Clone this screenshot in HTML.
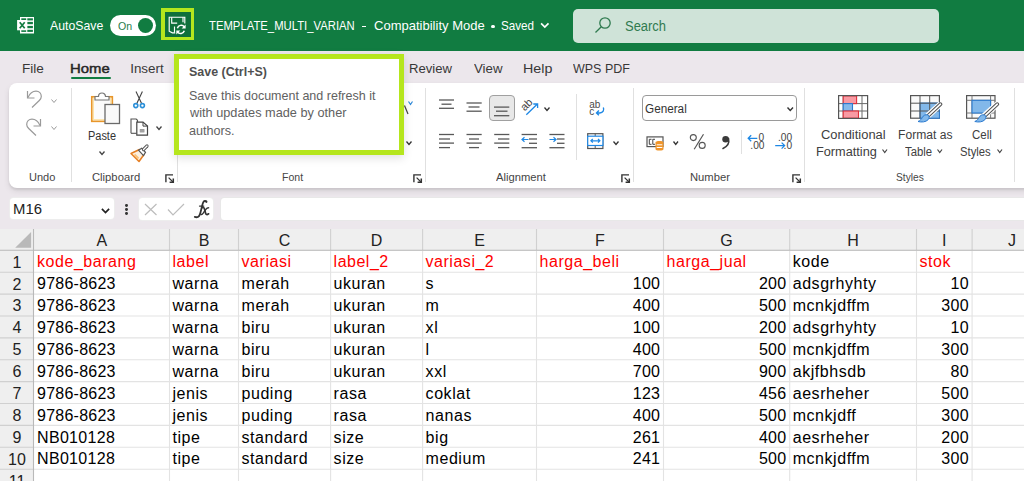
<!DOCTYPE html>
<html><head><meta charset="utf-8"><title>Excel</title><style>*{margin:0;padding:0;box-sizing:border-box}
html,body{width:1024px;height:481px;overflow:hidden;background:#ece7ec;font-family:"Liberation Sans",sans-serif}
.a{position:absolute;white-space:nowrap}
svg.a{overflow:visible}</style></head><body>
<div class="a" style="left:0px;top:0px;width:1024px;height:51px;background:#117c41"></div>
<svg class="a" style="left:17px;top:16px" width="18" height="18" viewBox="0 0 18 18"><rect x="3" y="1" width="14" height="16.5" fill="#fff"/>
<g fill="#117c41"><rect x="10.3" y="2.3" width="5.6" height="2.1"/><rect x="10.3" y="5.9" width="5.6" height="2.3"/><rect x="10.3" y="9.9" width="5.6" height="2.3"/><rect x="10.3" y="13.8" width="5.6" height="2.1"/>
<rect x="4.3" y="2.3" width="4.9" height="2.1"/><rect x="4.3" y="13.8" width="4.9" height="2.1"/></g>
<rect x="0.1" y="4" width="10" height="10.3" fill="#fff"/>
<path d="M2.7 6.2l5 6M7.7 6.2l-5 6" stroke="#117c41" stroke-width="1.7"/></svg>
<div class="a" style="left:50.20px;top:19.07px;font-size:13.5px;line-height:13.5px;color:#fff;font-weight:normal;transform:scaleX(0.9098);transform-origin:0 0;">AutoSave</div>
<div class="a" style="left:110px;top:15px;width:46px;height:21px;border-radius:10.5px;background:#fff"></div>
<div class="a" style="left:117.70px;top:20.89px;font-size:11px;line-height:11px;color:#2a7d4e;font-weight:normal;transform:scaleX(0.9618);transform-origin:0 0;">On</div>
<div class="a" style="left:138px;top:17.7px;width:15px;height:15px;border-radius:50%;background:#117c41"></div>
<div class="a" style="left:160.8px;top:8.3px;width:33.2px;height:31.7px;border:solid #b5e61d;border-width:4px 3.2px 3.3px 4px;background:#0f703b"></div>
<svg class="a" style="left:168px;top:16px" width="19" height="19" viewBox="0 0 19 19"><g fill="none" stroke="#fff" stroke-width="1.15">
<path d="M16.8 7.6V1.2H1.2V15.2L4.3 16.8H7.2"/><path d="M3.7 1.2V7.1H9.2M15 1.2V6.2M6.5 10.6V16.8"/></g>
<g fill="none" stroke="#fff" stroke-width="1.5">
<path d="M9.4 12.2A3.9 3.9 0 0 1 16.3 10.9"/><path d="M16.3 14.8A3.9 3.9 0 0 1 9.5 16"/></g>
<path d="M17.6 8.6V12.6H13.6z" fill="#fff"/><path d="M8.3 18.4V14.4H12.3z" fill="#fff"/></svg>
<div class="a" style="left:208.80px;top:19.23px;font-size:13.2px;line-height:13.2px;color:#fff;font-weight:normal;transform:scaleX(0.8573);transform-origin:0 0;">TEMPLATE_MULTI_VARIAN</div>
<div class="a" style="left:362.3px;top:25.9px;width:3.8px;height:1.3px;background:#fff"></div>
<div class="a" style="left:374.30px;top:19.23px;font-size:13.2px;line-height:13.2px;color:#fff;font-weight:normal;transform:scaleX(0.9874);transform-origin:0 0;">Compatibility Mode</div>
<div class="a" style="left:491.1px;top:24.6px;width:3.5px;height:3.5px;border-radius:50%;background:#fff"></div>
<div class="a" style="left:500.70px;top:19.23px;font-size:13.2px;line-height:13.2px;color:#fff;font-weight:normal;transform:scaleX(0.8851);transform-origin:0 0;">Saved</div>
<svg class="a" style="left:540px;top:22.3px" width="10" height="7" viewBox="0 0 10 7"><path d="M1.1 1.3L4.8 5 8.5 1.3" fill="none" stroke="#fff" stroke-width="1.7"/></svg>
<div class="a" style="left:573px;top:8.5px;width:366px;height:34px;border-radius:5px;background:#cfe3d8"></div>
<svg class="a" style="left:594px;top:16px" width="18" height="18" viewBox="0 0 18 18"><circle cx="11" cy="7" r="5.2" fill="none" stroke="#2f7a4f" stroke-width="1.3"/><path d="M7.3 10.7L1.5 16.5" stroke="#2f7a4f" stroke-width="1.3"/></svg>
<div class="a" style="left:625.20px;top:19.35px;font-size:14px;line-height:14px;color:#2f7a4f;font-weight:normal;transform:scaleX(0.9249);transform-origin:0 0;">Search</div>
<div class="a" style="left:21.99px;top:61.56px;font-size:13.4px;line-height:13.4px;color:#383838;font-weight:normal;transform:scaleX(1.0134);transform-origin:0 0;">File</div>
<div class="a" style="left:70.19px;top:61.56px;font-size:13.4px;line-height:13.4px;color:#262626;font-weight:normal;transform:scaleX(1.1117);transform-origin:0 0;-webkit-text-stroke:0.45px #262626;">Home</div>
<div class="a" style="left:71px;top:77px;width:40px;height:2px;background:#117c41;border-radius:1px"></div>
<div class="a" style="left:130.20px;top:61.56px;font-size:13.4px;line-height:13.4px;color:#383838;font-weight:normal;">Insert</div>
<div class="a" style="left:409.12px;top:61.56px;font-size:13.4px;line-height:13.4px;color:#383838;font-weight:normal;transform:scaleX(0.9784);transform-origin:0 0;">Review</div>
<div class="a" style="left:473.60px;top:61.56px;font-size:13.4px;line-height:13.4px;color:#383838;font-weight:normal;transform:scaleX(0.9893);transform-origin:0 0;">View</div>
<div class="a" style="left:522.83px;top:61.56px;font-size:13.4px;line-height:13.4px;color:#383838;font-weight:normal;transform:scaleX(1.0654);transform-origin:0 0;">Help</div>
<div class="a" style="left:573.20px;top:61.56px;font-size:13.4px;line-height:13.4px;color:#383838;font-weight:normal;transform:scaleX(0.9322);transform-origin:0 0;">WPS PDF</div>
<div class="a" style="left:8.5px;top:82.5px;width:1040px;height:105.3px;background:#fff;border-radius:8px;box-shadow:0 2px 2px rgba(0,0,0,.08),0 3px 6px rgba(0,0,0,.09)"></div>
<div class="a" style="left:71px;top:88px;width:1px;height:94px;background:#e0e0e0"></div>
<div class="a" style="left:177px;top:88px;width:1px;height:94px;background:#e0e0e0"></div>
<div class="a" style="left:425px;top:88px;width:1px;height:94px;background:#e0e0e0"></div>
<div class="a" style="left:633px;top:88px;width:1px;height:94px;background:#e0e0e0"></div>
<div class="a" style="left:576px;top:94px;width:1px;height:66px;background:#e0e0e0"></div>
<div class="a" style="left:804px;top:88px;width:1px;height:94px;background:#e0e0e0"></div>
<div class="a" style="left:1014px;top:88px;width:1px;height:94px;background:#e0e0e0"></div>
<div class="a" style="left:28.70px;top:172.31px;font-size:11.8px;line-height:11.8px;color:#454545;font-weight:normal;transform:scaleX(0.9357);transform-origin:0 0;">Undo</div>
<div class="a" style="left:92.20px;top:172.31px;font-size:11.8px;line-height:11.8px;color:#454545;font-weight:normal;transform:scaleX(0.9533);transform-origin:0 0;">Clipboard</div>
<div class="a" style="left:281.50px;top:172.31px;font-size:11.8px;line-height:11.8px;color:#454545;font-weight:normal;transform:scaleX(0.8920);transform-origin:0 0;">Font</div>
<div class="a" style="left:495.75px;top:172.31px;font-size:11.8px;line-height:11.8px;color:#454545;font-weight:normal;transform:scaleX(0.9496);transform-origin:0 0;">Alignment</div>
<div class="a" style="left:690.00px;top:172.31px;font-size:11.8px;line-height:11.8px;color:#454545;font-weight:normal;transform:scaleX(0.9517);transform-origin:0 0;">Number</div>
<div class="a" style="left:895.70px;top:172.31px;font-size:11.8px;line-height:11.8px;color:#454545;font-weight:normal;transform:scaleX(0.8658);transform-origin:0 0;">Styles</div>
<svg class="a" style="left:164.5px;top:173.5px" width="10" height="10" viewBox="0 0 10 10"><path d="M0.9 8.2V0.9H8" fill="none" stroke="#333" stroke-width="1.4"/><path d="M3.6 3.6L8 8" stroke="#333" stroke-width="1.2"/><path d="M8.3 4.6V8.3H4.6" fill="none" stroke="#333" stroke-width="1.5"/></svg>
<svg class="a" style="left:412.5px;top:173.5px" width="10" height="10" viewBox="0 0 10 10"><path d="M0.9 8.2V0.9H8" fill="none" stroke="#333" stroke-width="1.4"/><path d="M3.6 3.6L8 8" stroke="#333" stroke-width="1.2"/><path d="M8.3 4.6V8.3H4.6" fill="none" stroke="#333" stroke-width="1.5"/></svg>
<svg class="a" style="left:621px;top:173.5px" width="10" height="10" viewBox="0 0 10 10"><path d="M0.9 8.2V0.9H8" fill="none" stroke="#333" stroke-width="1.4"/><path d="M3.6 3.6L8 8" stroke="#333" stroke-width="1.2"/><path d="M8.3 4.6V8.3H4.6" fill="none" stroke="#333" stroke-width="1.5"/></svg>
<svg class="a" style="left:792px;top:173.5px" width="10" height="10" viewBox="0 0 10 10"><path d="M0.9 8.2V0.9H8" fill="none" stroke="#333" stroke-width="1.4"/><path d="M3.6 3.6L8 8" stroke="#333" stroke-width="1.2"/><path d="M8.3 4.6V8.3H4.6" fill="none" stroke="#333" stroke-width="1.5"/></svg>
<svg class="a" style="left:25px;top:90px" width="18" height="19" viewBox="0 0 18 19"><path d="M2.5 1v7h7" fill="none" stroke="#9a9a9a" stroke-width="1.2"/><path d="M3 7.5C5 3 8 1.2 11 1.2c3.2 0 5.3 2.3 5.3 5.3 0 2-1 3-2 4L7 17.5" fill="none" stroke="#9a9a9a" stroke-width="1.2"/></svg>
<svg class="a" style="left:51px;top:98.5px" width="6" height="4" viewBox="0 0 6 4"><path d="M0.5 0.5l2.5 3l2.5 -3" fill="none" stroke="#9a9a9a" stroke-width="1"/></svg>
<svg class="a" style="left:25px;top:118px" width="18" height="19" viewBox="0 0 18 19"><path d="M15.5 1v7h-7" fill="none" stroke="#9a9a9a" stroke-width="1.2"/><path d="M15 7.5C13 3 10 1.2 7 1.2c-3.2 0-5.3 2.3-5.3 5.3 0 2 1 3 2 4L11 17.5" fill="none" stroke="#9a9a9a" stroke-width="1.2"/></svg>
<svg class="a" style="left:51px;top:126px" width="6" height="4" viewBox="0 0 6 4"><path d="M0.5 0.5l2.5 3l2.5 -3" fill="none" stroke="#9a9a9a" stroke-width="1"/></svg>
<svg class="a" style="left:90px;top:91px" width="31" height="34" viewBox="0 0 31 34"><rect x="1.8" y="5.8" width="20.5" height="24.5" fill="#fbfbfb" stroke="#e8962a" stroke-width="1.7"/><rect x="3.4" y="7.4" width="17.3" height="21.3" fill="none" stroke="#fde3a8" stroke-width="1.2"/>
<path d="M5 5.5h3.5a3.5 3.5 0 0 1 7 0H19v3.5H5z" fill="#fff" stroke="#777" stroke-width="1.2"/>
<rect x="15" y="13.5" width="14.5" height="19" fill="#f9f9f9" stroke="#6a6a6a" stroke-width="1.3"/></svg>
<div class="a" style="left:88.30px;top:130.24px;font-size:12px;line-height:12px;color:#333;font-weight:normal;transform:scaleX(0.9126);transform-origin:0 0;">Paste</div>
<svg class="a" style="left:99px;top:151px" width="6" height="4" viewBox="0 0 6 4"><path d="M0.5 0.5l2.5 3l2.5 -3" fill="none" stroke="#444" stroke-width="1.3"/></svg>
<svg class="a" style="left:132px;top:90px" width="14" height="19" viewBox="0 0 14 19"><path d="M4 1.4L9.6 13.6M10.4 1.4L4.8 13.6" stroke="#444" stroke-width="1.1"/><circle cx="3.8" cy="15.6" r="2" fill="#fff" stroke="#2b8fd8" stroke-width="1.6"/><circle cx="10.4" cy="15.6" r="2" fill="#fff" stroke="#2b8fd8" stroke-width="1.6"/></svg>
<svg class="a" style="left:130px;top:118px" width="19" height="19" viewBox="0 0 19 19"><path d="M1 15.3V1h5.2l1.3 1.3V4" fill="none" stroke="#555" stroke-width="1.1"/><path d="M1 15.3h5.5" stroke="#555" stroke-width="1.1"/><path d="M6.8 4.1h6.2l4.5 4V17.1H6.8z" fill="#fff" stroke="#444" stroke-width="1.2"/><path d="M13 4.1v4h4.5" fill="none" stroke="#444" stroke-width="1"/><rect x="9.8" y="11.1" width="4.6" height="3.3" fill="#8a8a8a"/><path d="M9.8 12.2h4.6M9.8 13.3h4.6" stroke="#c8c8c8" stroke-width="0.5"/></svg>
<svg class="a" style="left:156px;top:126px" width="6" height="4" viewBox="0 0 6 4"><path d="M0.5 0.5l2.5 3l2.5 -3" fill="none" stroke="#444" stroke-width="1.3"/></svg>
<svg class="a" style="left:130px;top:145px" width="20" height="18" viewBox="0 0 20 18"><path d="M1 8.5L9.5 4.5 14 9.5 9 16.5z" fill="#fdf0e0" stroke="#e67e22" stroke-width="1.5" stroke-linejoin="round"/><path d="M4.5 9.5l4 4" stroke="#f9c27a" stroke-width="2"/><path d="M8.5 5.2l3.2-2 3.8 4.2-2 3.2z" fill="#fff" stroke="#555" stroke-width="1.2"/><path d="M13.5 4.5l3.5-3.5" stroke="#555" stroke-width="3.2" stroke-linecap="round"/><path d="M13.5 4.5l3.5-3.5" stroke="#fff" stroke-width="1.2" stroke-linecap="round"/></svg>
<svg class="a" style="left:407.8px;top:101px" width="5" height="4" viewBox="0 0 5 4"><path d="M0.5 0.5l2.0 3l2.0 -3" fill="none" stroke="#2b88d8" stroke-width="1.2"/></svg>
<svg class="a" style="left:403.5px;top:104.5px" width="5" height="10" viewBox="0 0 5 10"><path d="M0.5 0.5L4 9" stroke="#444" stroke-width="1.2"/></svg>
<svg class="a" style="left:405.8px;top:140.5px" width="6" height="4" viewBox="0 0 6 4"><path d="M0.5 0.5l2.5 3l2.5 -3" fill="none" stroke="#333" stroke-width="1.3"/></svg>
<svg class="a" style="left:0;top:0" width="1024" height="200"><path d="M439 100H454" stroke="#585858" stroke-width="1.3"/><path d="M441.5 104.2H451.5" stroke="#585858" stroke-width="1.3"/><path d="M439 108.3H454" stroke="#585858" stroke-width="1.3"/><path d="M466.5 103H481.7" stroke="#585858" stroke-width="1.3"/><path d="M468.5 107H479.5" stroke="#585858" stroke-width="1.3"/><path d="M466.5 111.2H481.7" stroke="#585858" stroke-width="1.3"/><path d="M494 107.1H509.3" stroke="#585858" stroke-width="1.3"/><path d="M496 111.2H507.5" stroke="#585858" stroke-width="1.3"/><path d="M494 115.7H509.3" stroke="#585858" stroke-width="1.3"/><path d="M439 134.5H454" stroke="#585858" stroke-width="1.3"/><path d="M439 139H450" stroke="#585858" stroke-width="1.3"/><path d="M439 143.1H454" stroke="#585858" stroke-width="1.3"/><path d="M439 147.6H450" stroke="#585858" stroke-width="1.3"/><path d="M466.5 134.5H481.7" stroke="#585858" stroke-width="1.3"/><path d="M469 139H479" stroke="#585858" stroke-width="1.3"/><path d="M466.5 143.1H481.7" stroke="#585858" stroke-width="1.3"/><path d="M469 147.6H479" stroke="#585858" stroke-width="1.3"/><path d="M494.2 134.5H509.3" stroke="#585858" stroke-width="1.3"/><path d="M498 139H509.3" stroke="#585858" stroke-width="1.3"/><path d="M494.2 143.1H509.3" stroke="#585858" stroke-width="1.3"/><path d="M498 147.6H509.3" stroke="#585858" stroke-width="1.3"/><path d="M521.6 134.5H537" stroke="#585858" stroke-width="1.3"/><path d="M529 139H537" stroke="#585858" stroke-width="1.3"/><path d="M529 143.3H537" stroke="#585858" stroke-width="1.3"/><path d="M521.6 147.7H537" stroke="#585858" stroke-width="1.3"/><path d="M549.4 134.5H564.5" stroke="#585858" stroke-width="1.3"/><path d="M557 139H564.5" stroke="#585858" stroke-width="1.3"/><path d="M557 143.3H564.5" stroke="#585858" stroke-width="1.3"/><path d="M549.4 147.7H564.5" stroke="#585858" stroke-width="1.3"/></svg>
<div class="a" style="left:489px;top:95px;width:26px;height:25.5px;border:1px solid #a0a0a0;border-radius:4px;background:#e8e8e8"></div>
<svg class="a" style="left:0;top:0" width="1024" height="200"><path d="M494 107.1H509.3" stroke="#585858" stroke-width="1.3"/><path d="M496 111.2H507.5" stroke="#585858" stroke-width="1.3"/><path d="M494 115.7H509.3" stroke="#585858" stroke-width="1.3"/></svg>
<svg class="a" style="left:521px;top:137px" width="8" height="5" viewBox="0 0 8 5"><path d="M7.5 2.5H1M3.5 0.3L1 2.5l2.5 2.2" fill="none" stroke="#1e88e5" stroke-width="1.2"/></svg>
<svg class="a" style="left:549px;top:137px" width="8" height="5" viewBox="0 0 8 5"><path d="M0.5 2.5H7M4.5 0.3L7 2.5l-2.5 2.2" fill="none" stroke="#1e88e5" stroke-width="1.2"/></svg>
<svg class="a" style="left:520px;top:98px" width="20" height="19" viewBox="0 0 20 19"><text x="0.2" y="10.6" font-size="11" fill="#444" font-family="Liberation Sans" transform="rotate(-45 6 6.5)">ab</text><path d="M6.3 16.8L17.4 6M13.3 6h4.3v4" fill="none" stroke="#1e88e5" stroke-width="1.3"/></svg>
<svg class="a" style="left:544px;top:107px" width="6" height="4" viewBox="0 0 6 4"><path d="M0.5 0.5l2.5 3l2.5 -3" fill="none" stroke="#333" stroke-width="1.3"/></svg>
<svg class="a" style="left:589px;top:99px" width="17" height="19" viewBox="0 0 17 19"><text x="0.2" y="8.7" font-size="10" fill="#4a4a4a" font-family="Liberation Sans">ab</text><text x="0.2" y="16.4" font-size="10" fill="#4a4a4a" font-family="Liberation Sans">c</text><path d="M14.3 8.5c1.2 2.6-0.3 5.3-3.5 5.5H7.6M9.9 11.4L7.5 13.9l2.4 2.4" fill="none" stroke="#1e88e5" stroke-width="1.4"/></svg>
<svg class="a" style="left:587px;top:133px" width="17" height="17" viewBox="0 0 17 17"><rect x="0.7" y="0.7" width="15.2" height="14.8" fill="#fff" stroke="#555" stroke-width="1.2"/><path d="M8.2 0.7v2.5M8.2 12.5v3" stroke="#555" stroke-width="1"/><rect x="0.7" y="3.2" width="15.2" height="9.3" fill="#fff" stroke="#1e88e5" stroke-width="1.2"/><path d="M4 7.8h8.8M5.8 6l-1.9 1.8 1.9 1.8M11 6l1.9 1.8-1.9 1.8" fill="none" stroke="#1e88e5" stroke-width="1.2"/></svg>
<svg class="a" style="left:612.7px;top:140.5px" width="6" height="4" viewBox="0 0 6 4"><path d="M0.5 0.5l2.5 3l2.5 -3" fill="none" stroke="#333" stroke-width="1.3"/></svg>
<div class="a" style="left:642px;top:95.3px;width:154.5px;height:25.6px;border:1px solid #9a9a9a;border-radius:4px;background:#fff"></div>
<div class="a" style="left:644.90px;top:102.74px;font-size:12px;line-height:12px;color:#333;font-weight:normal;transform:scaleX(0.9780);transform-origin:0 0;">General</div>
<svg class="a" style="left:787px;top:106.5px" width="6.5" height="4" viewBox="0 0 6.5 4"><path d="M0.5 0.5l2.75 3l2.75 -3" fill="none" stroke="#333" stroke-width="1.4"/></svg>
<svg class="a" style="left:646px;top:136px" width="20" height="15" viewBox="0 0 20 15"><rect x="1" y="0.9" width="16" height="9.7" fill="#fff" stroke="#555" stroke-width="1.2"/><path d="M5.5 3.3H3.3v5h2.2M9 3.3H6.8v5h2.2" fill="none" stroke="#444" stroke-width="1"/><path d="M9.5 6.5c0-1 1.5-1.5 4-1.5s4 .5 4 1.5v6.5c0 1-1.5 1.5-4 1.5s-4-.5-4-1.5z" fill="#f0952a"/><path d="M10.7 8.8h5.6M10.7 11.5h5.6" stroke="#fff" stroke-width="1"/></svg>
<svg class="a" style="left:672.5px;top:141px" width="5.5" height="4" viewBox="0 0 5.5 4"><path d="M0.5 0.5l2.25 3l2.25 -3" fill="none" stroke="#333" stroke-width="1.3"/></svg>
<svg class="a" style="left:689px;top:133px" width="18" height="17" viewBox="0 0 18 17"><circle cx="4.3" cy="4.6" r="3" fill="none" stroke="#555" stroke-width="1.1"/><circle cx="13.2" cy="12.4" r="3" fill="none" stroke="#555" stroke-width="1.1"/><path d="M14.5 1.3L5.2 16.3" stroke="#555" stroke-width="1.2"/></svg>
<svg class="a" style="left:721px;top:135px" width="10" height="14" viewBox="0 0 10 14"><circle cx="4.6" cy="4.3" r="3.3" fill="#3a3a3a"/><path d="M7.5 3.5C8.5 8 6.5 11.5 2 13.4" fill="none" stroke="#3a3a3a" stroke-width="1.6" stroke-linecap="round"/></svg>
<div class="a" style="left:741px;top:130px;width:1px;height:24px;background:#e0e0e0"></div>
<svg class="a" style="left:747px;top:133px" width="18" height="17" viewBox="0 0 18 17"><path d="M10.3 5.3H1.2M4.2 2.3L1.2 5.3 4.2 8.3" fill="none" stroke="#1e88e5" stroke-width="1.3"/><text x="11.6" y="7.6" font-size="10.2" fill="#444" font-family="Liberation Sans">0</text><text x="3.3" y="16.4" font-size="10.2" fill="#444" font-family="Liberation Sans">.00</text></svg>
<svg class="a" style="left:775px;top:133px" width="18" height="17" viewBox="0 0 18 17"><text x="2.9" y="7.6" font-size="10.2" fill="#444" font-family="Liberation Sans">.00</text><path d="M0.2 12.6H9.6M6.6 9.6L9.6 12.6 6.6 15.6" fill="none" stroke="#1e88e5" stroke-width="1.3"/><text x="8.6" y="16.4" font-size="10.2" fill="#444" font-family="Liberation Sans">.0</text></svg>
<svg class="a" style="left:838px;top:94.5px" width="31" height="24" viewBox="0 0 31 24"><rect x="0.6" y="0.6" width="29" height="22.8" fill="#fff"/>
<path d="M0.6 8.6h29M0.6 16h29M5.2 0.6v22.8M24 0.6v22.8" stroke="#6a6a6a" stroke-width="1"/>
<rect x="5.2" y="0.9" width="13.4" height="7.7" fill="#f99aa3" stroke="#e0303a" stroke-width="1.1"/>
<rect x="5.2" y="8.6" width="9.3" height="7.4" fill="#86b9ea" stroke="#2a7ad0" stroke-width="1.1"/>
<rect x="5.2" y="16" width="15.3" height="7.2" fill="#f99aa3" stroke="#e0303a" stroke-width="1.1"/>
<rect x="0.6" y="0.6" width="29" height="22.8" fill="none" stroke="#555" stroke-width="1.2"/></svg>
<svg class="a" style="left:910px;top:94.5px" width="33" height="29" viewBox="0 0 33 29"><rect x="0.6" y="0.6" width="28.8" height="22.6" fill="#fafafa" stroke="#555" stroke-width="1.2"/>
<rect x="10" y="8" width="19.4" height="15.2" fill="#82b8ea" stroke="#2a7ad0" stroke-width="1"/>
<path d="M0.6 8.2h28.8M0.6 16h28.8M10 0.6v22.6M19.7 0.6v22.6" stroke="#555" stroke-width="1"/>
<path d="M30.8 9L17.5 21" stroke="#fff" stroke-width="6"/>
<path d="M30.5 9.2L18.5 20.3" stroke="#555" stroke-width="3.8" stroke-linecap="round"/><path d="M30.5 9.2L18.5 20.3" stroke="#fff" stroke-width="1.6" stroke-linecap="round"/>
<path d="M17.8 20c-2.5-0.8-4.5 0.5-5.5 2.5-0.8 1.5-2 3-4.3 4 3.5 1 8 0.5 10-1.7 1.8-2 1.5-4-0.2-4.8z" fill="#82b8ea" stroke="#2a7ad0" stroke-width="1"/></svg>
<svg class="a" style="left:966px;top:94.5px" width="33" height="29" viewBox="0 0 33 29"><rect x="0.6" y="0.6" width="28.4" height="22.6" fill="#fafafa" stroke="#555" stroke-width="1.2"/>
<path d="M0.6 5.3h28.4M0.6 18h28.4M6 0.6v22.6M24.6 0.6v22.6" stroke="#777" stroke-width="1"/>
<rect x="6" y="5.3" width="18.6" height="12.7" fill="#82b8ea" stroke="#2a7ad0" stroke-width="1.1"/>
<path d="M31.5 9L18 21" stroke="#fff" stroke-width="6"/>
<path d="M31.3 9.2L19.3 20.3" stroke="#555" stroke-width="3.8" stroke-linecap="round"/><path d="M31.3 9.2L19.3 20.3" stroke="#fff" stroke-width="1.6" stroke-linecap="round"/>
<path d="M18.6 20c-2.5-0.8-4.5 0.5-5.5 2.5-0.8 1.5-2 3-4.3 4 3.5 1 8 0.5 10-1.7 1.8-2 1.5-4-0.2-4.8z" fill="#82b8ea" stroke="#2a7ad0" stroke-width="1"/></svg>
<div class="a" style="left:820.70px;top:129.04px;font-size:12px;line-height:12px;color:#404040;font-weight:normal;transform:scaleX(1.0762);transform-origin:0 0;">Conditional</div>
<div class="a" style="left:816.25px;top:145.84px;font-size:12px;line-height:12px;color:#404040;font-weight:normal;transform:scaleX(1.0613);transform-origin:0 0;">Formatting</div>
<svg class="a" style="left:882px;top:149px" width="5.5" height="4" viewBox="0 0 5.5 4"><path d="M0.5 0.5l2.25 3l2.25 -3" fill="none" stroke="#444" stroke-width="1.2"/></svg>
<div class="a" style="left:897.50px;top:129.04px;font-size:12px;line-height:12px;color:#404040;font-weight:normal;transform:scaleX(1.0090);transform-origin:0 0;">Format as</div>
<div class="a" style="left:905.30px;top:145.84px;font-size:12px;line-height:12px;color:#404040;font-weight:normal;transform:scaleX(0.9444);transform-origin:0 0;">Table</div>
<svg class="a" style="left:937px;top:149px" width="5.5" height="4" viewBox="0 0 5.5 4"><path d="M0.5 0.5l2.25 3l2.25 -3" fill="none" stroke="#444" stroke-width="1.2"/></svg>
<div class="a" style="left:972.10px;top:129.04px;font-size:12px;line-height:12px;color:#404040;font-weight:normal;transform:scaleX(0.9572);transform-origin:0 0;">Cell</div>
<div class="a" style="left:960.00px;top:145.84px;font-size:12px;line-height:12px;color:#404040;font-weight:normal;transform:scaleX(0.9395);transform-origin:0 0;">Styles</div>
<svg class="a" style="left:996.5px;top:149px" width="5.5" height="4" viewBox="0 0 5.5 4"><path d="M0.5 0.5l2.25 3l2.25 -3" fill="none" stroke="#444" stroke-width="1.2"/></svg>
<div class="a" style="left:174.3px;top:53.6px;width:229.8px;height:101.4px;border:5.6px solid #b5e61d;background:#fff;box-shadow:0 3px 9px rgba(0,0,0,.12)"></div>
<div class="a" style="left:188.70px;top:65.54px;font-size:12px;line-height:12px;color:#505050;font-weight:bold;transform:scaleX(1.0382);transform-origin:0 0;">Save (Ctrl+S)</div>
<div class="a" style="left:188.70px;top:89.65px;font-size:12.7px;line-height:12.7px;color:#616161;font-weight:normal;transform:scaleX(0.9864);transform-origin:0 0;">Save this document and refresh it</div>
<div class="a" style="left:189.70px;top:106.55px;font-size:12.7px;line-height:12.7px;color:#616161;font-weight:normal;transform:scaleX(1.0042);transform-origin:0 0;">with updates made by other</div>
<div class="a" style="left:188.70px;top:124.55px;font-size:12.7px;line-height:12.7px;color:#616161;font-weight:normal;transform:scaleX(0.9941);transform-origin:0 0;">authors.</div>
<div class="a" style="left:8.7px;top:197.2px;width:106.8px;height:23.3px;background:#fff;border-radius:4.5px;border:1px solid rgba(0,0,0,.07)"></div>
<div class="a" style="left:12.92px;top:203.12px;font-size:13.8px;line-height:13.8px;color:#222;font-weight:normal;transform:scaleX(1.0777);transform-origin:0 0;">M16</div>
<svg class="a" style="left:101px;top:207.5px" width="9" height="6" viewBox="0 0 9 6"><path d="M0.9 0.9L4.5 4.6 8.1 0.9" fill="none" stroke="#222" stroke-width="1.7"/></svg>
<div class="a" style="left:125.2px;top:204.2px;width:2.8px;height:2.8px;border-radius:50%;background:#333"></div>
<div class="a" style="left:125.2px;top:208.29999999999998px;width:2.8px;height:2.8px;border-radius:50%;background:#333"></div>
<div class="a" style="left:125.2px;top:212.4px;width:2.8px;height:2.8px;border-radius:50%;background:#333"></div>
<div class="a" style="left:137.8px;top:197.4px;width:76.4px;height:23.5px;background:#fff;border-radius:4.5px;border:1px solid rgba(0,0,0,.07)"></div>
<svg class="a" style="left:144px;top:203px" width="14" height="13" viewBox="0 0 14 13"><path d="M1 1l11.5 11M12.5 1L1 12" stroke="#bdbdbd" stroke-width="1.2"/></svg>
<svg class="a" style="left:167px;top:203px" width="18" height="13" viewBox="0 0 18 13"><path d="M1 6.5l5 5.5L17 1" fill="none" stroke="#bdbdbd" stroke-width="1.2"/></svg>
<svg class="a" style="left:192px;top:199px" width="20" height="20" viewBox="0 0 20 20"><g fill="none" stroke="#333" stroke-linecap="round"><path d="M14.4 2.9C13.6 1.6 12 1.7 11.2 3.3C10.1 5.5 9.3 11.5 7.8 15.6C7 17.8 5.2 18.9 2.8 17.9" stroke-width="1.8"/><circle cx="14.3" cy="2.6" r="1.1" fill="#333" stroke="none"/><path d="M7.5 7.1H11.8" stroke-width="1.2"/><path d="M9.8 8.7C11.2 8 12 8.3 12.4 9.8L13.6 14.2C14 15.7 15 16 16.6 14.8" stroke-width="1.7"/><path d="M16.7 8.8C15.6 8.3 14.6 9.1 13.1 11.3L11.2 14.2C10.5 15.2 9.9 15.7 9 15.3" stroke-width="1.4"/></g></svg>
<div class="a" style="left:219.6px;top:197.2px;width:820px;height:23.8px;background:#fff;border-radius:4.5px;border:1px solid rgba(0,0,0,.09)"></div>
<div class="a" style="left:0px;top:228.5px;width:1024px;height:253px;background:#fff"></div>
<div class="a" style="left:0px;top:228.5px;width:1024px;height:22px;background:#efefef"></div>
<div class="a" style="left:0px;top:228.5px;width:34px;height:253px;background:#efefef"></div>
<svg class="a" style="left:15px;top:232px" width="17" height="16" viewBox="0 0 17 16"><path d="M16.1 0.1V15.7H0.2z" fill="#b9b9b9"/></svg>
<svg class="a" style="left:0;top:0" width="1024" height="481"><path d="M34 272.19H1024" stroke="#e3e3e3" stroke-width="1.1"/><path d="M0 272.19H34" stroke="#d0d0d0" stroke-width="1.1"/><path d="M34 294.08H1024" stroke="#e3e3e3" stroke-width="1.1"/><path d="M0 294.08H34" stroke="#d0d0d0" stroke-width="1.1"/><path d="M34 315.97H1024" stroke="#e3e3e3" stroke-width="1.1"/><path d="M0 315.97H34" stroke="#d0d0d0" stroke-width="1.1"/><path d="M34 337.86H1024" stroke="#e3e3e3" stroke-width="1.1"/><path d="M0 337.86H34" stroke="#d0d0d0" stroke-width="1.1"/><path d="M34 359.75H1024" stroke="#e3e3e3" stroke-width="1.1"/><path d="M0 359.75H34" stroke="#d0d0d0" stroke-width="1.1"/><path d="M34 381.64H1024" stroke="#e3e3e3" stroke-width="1.1"/><path d="M0 381.64H34" stroke="#d0d0d0" stroke-width="1.1"/><path d="M34 403.53H1024" stroke="#e3e3e3" stroke-width="1.1"/><path d="M0 403.53H34" stroke="#d0d0d0" stroke-width="1.1"/><path d="M34 425.42H1024" stroke="#e3e3e3" stroke-width="1.1"/><path d="M0 425.42H34" stroke="#d0d0d0" stroke-width="1.1"/><path d="M34 447.31H1024" stroke="#e3e3e3" stroke-width="1.1"/><path d="M0 447.31H34" stroke="#d0d0d0" stroke-width="1.1"/><path d="M34 469.20H1024" stroke="#e3e3e3" stroke-width="1.1"/><path d="M0 469.20H34" stroke="#d0d0d0" stroke-width="1.1"/><path d="M169.5 250.5V481" stroke="#e3e3e3" stroke-width="1.1"/><path d="M169.5 229V250" stroke="#d0d0d0" stroke-width="1.1"/><path d="M238.5 250.5V481" stroke="#e3e3e3" stroke-width="1.1"/><path d="M238.5 229V250" stroke="#d0d0d0" stroke-width="1.1"/><path d="M330.6 250.5V481" stroke="#e3e3e3" stroke-width="1.1"/><path d="M330.6 229V250" stroke="#d0d0d0" stroke-width="1.1"/><path d="M422.6 250.5V481" stroke="#e3e3e3" stroke-width="1.1"/><path d="M422.6 229V250" stroke="#d0d0d0" stroke-width="1.1"/><path d="M536.5 250.5V481" stroke="#e3e3e3" stroke-width="1.1"/><path d="M536.5 229V250" stroke="#d0d0d0" stroke-width="1.1"/><path d="M663.5 250.5V481" stroke="#e3e3e3" stroke-width="1.1"/><path d="M663.5 229V250" stroke="#d0d0d0" stroke-width="1.1"/><path d="M789.7 250.5V481" stroke="#e3e3e3" stroke-width="1.1"/><path d="M789.7 229V250" stroke="#d0d0d0" stroke-width="1.1"/><path d="M916.5 250.5V481" stroke="#e3e3e3" stroke-width="1.1"/><path d="M916.5 229V250" stroke="#d0d0d0" stroke-width="1.1"/><path d="M972.1 250.5V481" stroke="#e3e3e3" stroke-width="1.1"/><path d="M972.1 229V250" stroke="#d0d0d0" stroke-width="1.1"/><path d="M0 250.3H1024" stroke="#b9b9b9" stroke-width="1.1"/><path d="M33.5 229V481" stroke="#b9b9b9" stroke-width="1.1"/></svg>
<div class="a" style="left:34.00px;top:233.06px;font-size:16px;line-height:16px;color:#222;width:135.50px;text-align:center;">A</div>
<div class="a" style="left:169.50px;top:233.06px;font-size:16px;line-height:16px;color:#222;width:69.00px;text-align:center;">B</div>
<div class="a" style="left:238.50px;top:233.06px;font-size:16px;line-height:16px;color:#222;width:92.10px;text-align:center;">C</div>
<div class="a" style="left:330.60px;top:233.06px;font-size:16px;line-height:16px;color:#222;width:92.00px;text-align:center;">D</div>
<div class="a" style="left:422.60px;top:233.06px;font-size:16px;line-height:16px;color:#222;width:113.90px;text-align:center;">E</div>
<div class="a" style="left:536.50px;top:233.06px;font-size:16px;line-height:16px;color:#222;width:127.00px;text-align:center;">F</div>
<div class="a" style="left:663.50px;top:233.06px;font-size:16px;line-height:16px;color:#222;width:126.20px;text-align:center;">G</div>
<div class="a" style="left:789.70px;top:233.06px;font-size:16px;line-height:16px;color:#222;width:126.80px;text-align:center;">H</div>
<div class="a" style="left:916.50px;top:233.06px;font-size:16px;line-height:16px;color:#222;width:55.60px;text-align:center;">I</div>
<div class="a" style="left:972.10px;top:233.06px;font-size:16px;line-height:16px;color:#222;width:79.90px;text-align:center;">J</div>
<div class="a" style="left:0.00px;top:254.66px;font-size:16px;line-height:16px;color:#222;width:34.00px;text-align:center;">1</div>
<div class="a" style="left:0.00px;top:276.55px;font-size:16px;line-height:16px;color:#222;width:34.00px;text-align:center;">2</div>
<div class="a" style="left:0.00px;top:298.44px;font-size:16px;line-height:16px;color:#222;width:34.00px;text-align:center;">3</div>
<div class="a" style="left:0.00px;top:320.33px;font-size:16px;line-height:16px;color:#222;width:34.00px;text-align:center;">4</div>
<div class="a" style="left:0.00px;top:342.22px;font-size:16px;line-height:16px;color:#222;width:34.00px;text-align:center;">5</div>
<div class="a" style="left:0.00px;top:364.11px;font-size:16px;line-height:16px;color:#222;width:34.00px;text-align:center;">6</div>
<div class="a" style="left:0.00px;top:386.00px;font-size:16px;line-height:16px;color:#222;width:34.00px;text-align:center;">7</div>
<div class="a" style="left:0.00px;top:407.89px;font-size:16px;line-height:16px;color:#222;width:34.00px;text-align:center;">8</div>
<div class="a" style="left:0.00px;top:429.78px;font-size:16px;line-height:16px;color:#222;width:34.00px;text-align:center;">9</div>
<div class="a" style="left:0.00px;top:451.67px;font-size:16px;line-height:16px;color:#222;width:34.00px;text-align:center;">10</div>
<div class="a" style="left:0.00px;top:473.56px;font-size:16px;line-height:16px;color:#222;width:34.00px;text-align:center;">11</div>
<div class="a" style="left:37.00px;top:254.46px;font-size:16px;line-height:16px;color:#ff0000;letter-spacing:0.550px;">kode_barang</div>
<div class="a" style="left:172.50px;top:254.46px;font-size:16px;line-height:16px;color:#ff0000;letter-spacing:0.550px;">label</div>
<div class="a" style="left:241.50px;top:254.46px;font-size:16px;line-height:16px;color:#ff0000;letter-spacing:0.550px;">variasi</div>
<div class="a" style="left:333.60px;top:254.46px;font-size:16px;line-height:16px;color:#ff0000;letter-spacing:0.507px;">label_2</div>
<div class="a" style="left:425.60px;top:254.46px;font-size:16px;line-height:16px;color:#ff0000;letter-spacing:0.517px;">variasi_2</div>
<div class="a" style="left:539.50px;top:254.46px;font-size:16px;line-height:16px;color:#ff0000;letter-spacing:0.550px;">harga_beli</div>
<div class="a" style="left:666.50px;top:254.46px;font-size:16px;line-height:16px;color:#ff0000;letter-spacing:0.550px;">harga_jual</div>
<div class="a" style="left:792.70px;top:254.46px;font-size:16px;line-height:16px;color:#000;letter-spacing:0.550px;">kode</div>
<div class="a" style="left:919.50px;top:254.46px;font-size:16px;line-height:16px;color:#ff0000;letter-spacing:0.550px;">stok</div>
<div class="a" style="left:37.00px;top:276.35px;font-size:16px;line-height:16px;color:#000;letter-spacing:0.250px;">9786-8623</div>
<div class="a" style="left:172.50px;top:276.35px;font-size:16px;line-height:16px;color:#000;letter-spacing:0.550px;">warna</div>
<div class="a" style="left:241.50px;top:276.35px;font-size:16px;line-height:16px;color:#000;letter-spacing:0.550px;">merah</div>
<div class="a" style="left:333.60px;top:276.35px;font-size:16px;line-height:16px;color:#000;letter-spacing:0.550px;">ukuran</div>
<div class="a" style="left:425.60px;top:276.35px;font-size:16px;line-height:16px;color:#000;letter-spacing:0.550px;">s</div>
<div class="a" style="left:536.50px;top:276.35px;font-size:16px;line-height:16px;color:#000;letter-spacing:0.250px;width:123.70px;text-align:right;">100</div>
<div class="a" style="left:663.50px;top:276.35px;font-size:16px;line-height:16px;color:#000;letter-spacing:0.250px;width:122.90px;text-align:right;">200</div>
<div class="a" style="left:792.70px;top:276.35px;font-size:16px;line-height:16px;color:#000;letter-spacing:0.550px;">adsgrhyhty</div>
<div class="a" style="left:916.50px;top:276.35px;font-size:16px;line-height:16px;color:#000;letter-spacing:0.250px;width:52.30px;text-align:right;">10</div>
<div class="a" style="left:37.00px;top:298.24px;font-size:16px;line-height:16px;color:#000;letter-spacing:0.250px;">9786-8623</div>
<div class="a" style="left:172.50px;top:298.24px;font-size:16px;line-height:16px;color:#000;letter-spacing:0.550px;">warna</div>
<div class="a" style="left:241.50px;top:298.24px;font-size:16px;line-height:16px;color:#000;letter-spacing:0.550px;">merah</div>
<div class="a" style="left:333.60px;top:298.24px;font-size:16px;line-height:16px;color:#000;letter-spacing:0.550px;">ukuran</div>
<div class="a" style="left:425.60px;top:298.24px;font-size:16px;line-height:16px;color:#000;letter-spacing:0.550px;">m</div>
<div class="a" style="left:536.50px;top:298.24px;font-size:16px;line-height:16px;color:#000;letter-spacing:0.250px;width:123.70px;text-align:right;">400</div>
<div class="a" style="left:663.50px;top:298.24px;font-size:16px;line-height:16px;color:#000;letter-spacing:0.250px;width:122.90px;text-align:right;">500</div>
<div class="a" style="left:792.70px;top:298.24px;font-size:16px;line-height:16px;color:#000;letter-spacing:0.550px;">mcnkjdffm</div>
<div class="a" style="left:916.50px;top:298.24px;font-size:16px;line-height:16px;color:#000;letter-spacing:0.250px;width:52.30px;text-align:right;">300</div>
<div class="a" style="left:37.00px;top:320.13px;font-size:16px;line-height:16px;color:#000;letter-spacing:0.250px;">9786-8623</div>
<div class="a" style="left:172.50px;top:320.13px;font-size:16px;line-height:16px;color:#000;letter-spacing:0.550px;">warna</div>
<div class="a" style="left:241.50px;top:320.13px;font-size:16px;line-height:16px;color:#000;letter-spacing:0.550px;">biru</div>
<div class="a" style="left:333.60px;top:320.13px;font-size:16px;line-height:16px;color:#000;letter-spacing:0.550px;">ukuran</div>
<div class="a" style="left:425.60px;top:320.13px;font-size:16px;line-height:16px;color:#000;letter-spacing:0.550px;">xl</div>
<div class="a" style="left:536.50px;top:320.13px;font-size:16px;line-height:16px;color:#000;letter-spacing:0.250px;width:123.70px;text-align:right;">100</div>
<div class="a" style="left:663.50px;top:320.13px;font-size:16px;line-height:16px;color:#000;letter-spacing:0.250px;width:122.90px;text-align:right;">200</div>
<div class="a" style="left:792.70px;top:320.13px;font-size:16px;line-height:16px;color:#000;letter-spacing:0.550px;">adsgrhyhty</div>
<div class="a" style="left:916.50px;top:320.13px;font-size:16px;line-height:16px;color:#000;letter-spacing:0.250px;width:52.30px;text-align:right;">10</div>
<div class="a" style="left:37.00px;top:342.02px;font-size:16px;line-height:16px;color:#000;letter-spacing:0.250px;">9786-8623</div>
<div class="a" style="left:172.50px;top:342.02px;font-size:16px;line-height:16px;color:#000;letter-spacing:0.550px;">warna</div>
<div class="a" style="left:241.50px;top:342.02px;font-size:16px;line-height:16px;color:#000;letter-spacing:0.550px;">biru</div>
<div class="a" style="left:333.60px;top:342.02px;font-size:16px;line-height:16px;color:#000;letter-spacing:0.550px;">ukuran</div>
<div class="a" style="left:425.60px;top:342.02px;font-size:16px;line-height:16px;color:#000;letter-spacing:0.550px;">l</div>
<div class="a" style="left:536.50px;top:342.02px;font-size:16px;line-height:16px;color:#000;letter-spacing:0.250px;width:123.70px;text-align:right;">400</div>
<div class="a" style="left:663.50px;top:342.02px;font-size:16px;line-height:16px;color:#000;letter-spacing:0.250px;width:122.90px;text-align:right;">500</div>
<div class="a" style="left:792.70px;top:342.02px;font-size:16px;line-height:16px;color:#000;letter-spacing:0.550px;">mcnkjdffm</div>
<div class="a" style="left:916.50px;top:342.02px;font-size:16px;line-height:16px;color:#000;letter-spacing:0.250px;width:52.30px;text-align:right;">300</div>
<div class="a" style="left:37.00px;top:363.91px;font-size:16px;line-height:16px;color:#000;letter-spacing:0.250px;">9786-8623</div>
<div class="a" style="left:172.50px;top:363.91px;font-size:16px;line-height:16px;color:#000;letter-spacing:0.550px;">warna</div>
<div class="a" style="left:241.50px;top:363.91px;font-size:16px;line-height:16px;color:#000;letter-spacing:0.550px;">biru</div>
<div class="a" style="left:333.60px;top:363.91px;font-size:16px;line-height:16px;color:#000;letter-spacing:0.550px;">ukuran</div>
<div class="a" style="left:425.60px;top:363.91px;font-size:16px;line-height:16px;color:#000;letter-spacing:0.550px;">xxl</div>
<div class="a" style="left:536.50px;top:363.91px;font-size:16px;line-height:16px;color:#000;letter-spacing:0.250px;width:123.70px;text-align:right;">700</div>
<div class="a" style="left:663.50px;top:363.91px;font-size:16px;line-height:16px;color:#000;letter-spacing:0.250px;width:122.90px;text-align:right;">900</div>
<div class="a" style="left:792.70px;top:363.91px;font-size:16px;line-height:16px;color:#000;letter-spacing:0.550px;">akjfbhsdb</div>
<div class="a" style="left:916.50px;top:363.91px;font-size:16px;line-height:16px;color:#000;letter-spacing:0.250px;width:52.30px;text-align:right;">80</div>
<div class="a" style="left:37.00px;top:385.80px;font-size:16px;line-height:16px;color:#000;letter-spacing:0.250px;">9786-8623</div>
<div class="a" style="left:172.50px;top:385.80px;font-size:16px;line-height:16px;color:#000;letter-spacing:0.550px;">jenis</div>
<div class="a" style="left:241.50px;top:385.80px;font-size:16px;line-height:16px;color:#000;letter-spacing:0.550px;">puding</div>
<div class="a" style="left:333.60px;top:385.80px;font-size:16px;line-height:16px;color:#000;letter-spacing:0.550px;">rasa</div>
<div class="a" style="left:425.60px;top:385.80px;font-size:16px;line-height:16px;color:#000;letter-spacing:0.550px;">coklat</div>
<div class="a" style="left:536.50px;top:385.80px;font-size:16px;line-height:16px;color:#000;letter-spacing:0.250px;width:123.70px;text-align:right;">123</div>
<div class="a" style="left:663.50px;top:385.80px;font-size:16px;line-height:16px;color:#000;letter-spacing:0.250px;width:122.90px;text-align:right;">456</div>
<div class="a" style="left:792.70px;top:385.80px;font-size:16px;line-height:16px;color:#000;letter-spacing:0.550px;">aesrheher</div>
<div class="a" style="left:916.50px;top:385.80px;font-size:16px;line-height:16px;color:#000;letter-spacing:0.250px;width:52.30px;text-align:right;">500</div>
<div class="a" style="left:37.00px;top:407.69px;font-size:16px;line-height:16px;color:#000;letter-spacing:0.250px;">9786-8623</div>
<div class="a" style="left:172.50px;top:407.69px;font-size:16px;line-height:16px;color:#000;letter-spacing:0.550px;">jenis</div>
<div class="a" style="left:241.50px;top:407.69px;font-size:16px;line-height:16px;color:#000;letter-spacing:0.550px;">puding</div>
<div class="a" style="left:333.60px;top:407.69px;font-size:16px;line-height:16px;color:#000;letter-spacing:0.550px;">rasa</div>
<div class="a" style="left:425.60px;top:407.69px;font-size:16px;line-height:16px;color:#000;letter-spacing:0.550px;">nanas</div>
<div class="a" style="left:536.50px;top:407.69px;font-size:16px;line-height:16px;color:#000;letter-spacing:0.250px;width:123.70px;text-align:right;">400</div>
<div class="a" style="left:663.50px;top:407.69px;font-size:16px;line-height:16px;color:#000;letter-spacing:0.250px;width:122.90px;text-align:right;">500</div>
<div class="a" style="left:792.70px;top:407.69px;font-size:16px;line-height:16px;color:#000;letter-spacing:0.550px;">mcnkjdff</div>
<div class="a" style="left:916.50px;top:407.69px;font-size:16px;line-height:16px;color:#000;letter-spacing:0.250px;width:52.30px;text-align:right;">300</div>
<div class="a" style="left:37.00px;top:429.58px;font-size:16px;line-height:16px;color:#000;letter-spacing:0.325px;">NB010128</div>
<div class="a" style="left:172.50px;top:429.58px;font-size:16px;line-height:16px;color:#000;letter-spacing:0.550px;">tipe</div>
<div class="a" style="left:241.50px;top:429.58px;font-size:16px;line-height:16px;color:#000;letter-spacing:0.550px;">standard</div>
<div class="a" style="left:333.60px;top:429.58px;font-size:16px;line-height:16px;color:#000;letter-spacing:0.550px;">size</div>
<div class="a" style="left:425.60px;top:429.58px;font-size:16px;line-height:16px;color:#000;letter-spacing:0.550px;">big</div>
<div class="a" style="left:536.50px;top:429.58px;font-size:16px;line-height:16px;color:#000;letter-spacing:0.250px;width:123.70px;text-align:right;">261</div>
<div class="a" style="left:663.50px;top:429.58px;font-size:16px;line-height:16px;color:#000;letter-spacing:0.250px;width:122.90px;text-align:right;">400</div>
<div class="a" style="left:792.70px;top:429.58px;font-size:16px;line-height:16px;color:#000;letter-spacing:0.550px;">aesrheher</div>
<div class="a" style="left:916.50px;top:429.58px;font-size:16px;line-height:16px;color:#000;letter-spacing:0.250px;width:52.30px;text-align:right;">200</div>
<div class="a" style="left:37.00px;top:451.47px;font-size:16px;line-height:16px;color:#000;letter-spacing:0.325px;">NB010128</div>
<div class="a" style="left:172.50px;top:451.47px;font-size:16px;line-height:16px;color:#000;letter-spacing:0.550px;">tipe</div>
<div class="a" style="left:241.50px;top:451.47px;font-size:16px;line-height:16px;color:#000;letter-spacing:0.550px;">standard</div>
<div class="a" style="left:333.60px;top:451.47px;font-size:16px;line-height:16px;color:#000;letter-spacing:0.550px;">size</div>
<div class="a" style="left:425.60px;top:451.47px;font-size:16px;line-height:16px;color:#000;letter-spacing:0.550px;">medium</div>
<div class="a" style="left:536.50px;top:451.47px;font-size:16px;line-height:16px;color:#000;letter-spacing:0.250px;width:123.70px;text-align:right;">241</div>
<div class="a" style="left:663.50px;top:451.47px;font-size:16px;line-height:16px;color:#000;letter-spacing:0.250px;width:122.90px;text-align:right;">500</div>
<div class="a" style="left:792.70px;top:451.47px;font-size:16px;line-height:16px;color:#000;letter-spacing:0.550px;">mcnkjdffm</div>
<div class="a" style="left:916.50px;top:451.47px;font-size:16px;line-height:16px;color:#000;letter-spacing:0.250px;width:52.30px;text-align:right;">300</div>
</body></html>
